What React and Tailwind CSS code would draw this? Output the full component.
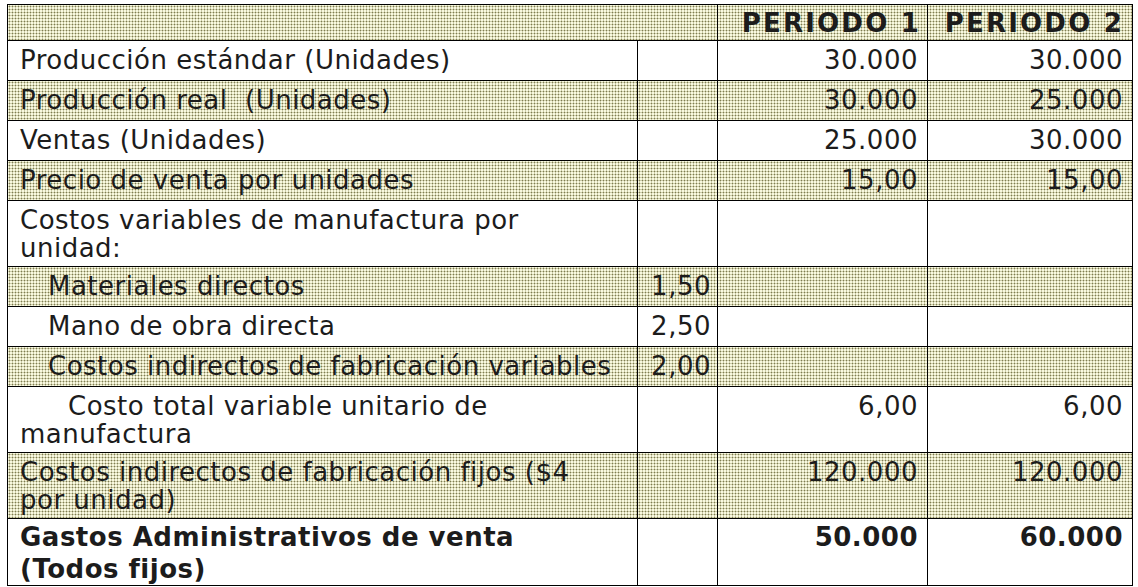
import React from 'react';

const hatch = "bg-[#f9f9df] bg-[radial-gradient(circle,#7f7d4f_44%,transparent_49%)] bg-[length:3px_3px]";

const rows = [
    { label: "Producción estándar (Unidades)", p1: "30.000", p2: "30.000" },
    { label: "Producción real \u00a0(Unidades)", p1: "30.000", p2: "25.000", shaded: true },
    { label: "Ventas (Unidades)", p1: "25.000", p2: "30.000" },
    { label: "Precio de venta por unidades", p1: "15,00", p2: "15,00", shaded: true },
    { label: "Costos variables de manufactura por unidad:", tall: true },
    { label: "Materiales directos", unit: "1,50", indent: true, shaded: true },
    { label: "Mano de obra directa", unit: "2,50", indent: true },
    { label: "Costos indirectos de fabricación variables", unit: "2,00", indent: true, shaded: true },
    { label: "Costo total variable unitario de manufactura", p1: "6,00", p2: "6,00", tall: true, firstIndent: true },
    { label: "Costos indirectos de fabricación fijos ($4 por unidad)", p1: "120.000", p2: "120.000", tall: true, shaded: true },
    { label: "Gastos Administrativos de venta (Todos fijos)", p1: "50.000", p2: "60.000", tall: true, bold: true },
];

export default function App() {
    return <div className="bg-white w-[1138px] h-[587px] pt-[4px] pl-[7px] font-['DejaVu_Sans',Verdana,sans-serif] text-[#1c1c1c]">
        <table className="border-collapse w-[1125px] table-fixed">
            <colgroup>
                <col className="w-[630px]" />
                <col className="w-[80px]" />
                <col className="w-[210px]" />
                <col className="w-[205px]" />
            </colgroup>
            <thead>
                <tr className={hatch + " h-[36px]"}>
                    <th colSpan={2} className="border border-black"></th>
                    <th className="border border-black text-right pr-[6px] text-[26px] leading-[30px] tracking-[2.2px] font-bold">PERIODO 1</th>
                    <th className="border border-black text-right pr-[8px] text-[26px] leading-[30px] tracking-[2.2px] font-bold">PERIODO 2</th>
                </tr>
            </thead>
            <tbody>
                {rows.map((row, i) => {
                    const shade = row.shaded ? hatch : "";
                    const cell = "border border-black align-top";
                    const text = row.bold ? "font-bold text-[26px] tracking-[0.5px] leading-[32px]" : "text-[26px] tracking-[0.5px] leading-[28px]";
                    return <tr key={i} className={(row.tall ? "h-[66px] " : "h-[40px] ") + shade + " " + text}>
                        <td className={cell + (row.bold ? " pt-[2px]" : " pt-[5px]") + " pr-[16px] " + (row.indent ? "pl-[40px]" : "pl-[12px]")}>
                            {row.firstIndent
                                ? <span className="inline-block indent-[48px]">{row.label}</span>
                                : row.label}
                        </td>
                        <td className={cell + " pt-[5px] text-right pr-[6px]"}>{row.unit}</td>
                        <td className={cell + (row.bold ? " pt-[2px]" : " pt-[5px]") + " text-right pr-[9px]"}>{row.p1}</td>
                        <td className={cell + (row.bold ? " pt-[2px]" : " pt-[5px]") + " text-right pr-[9px]"}>{row.p2}</td>
                    </tr>;
                })}
            </tbody>
        </table>
    </div>;
}
